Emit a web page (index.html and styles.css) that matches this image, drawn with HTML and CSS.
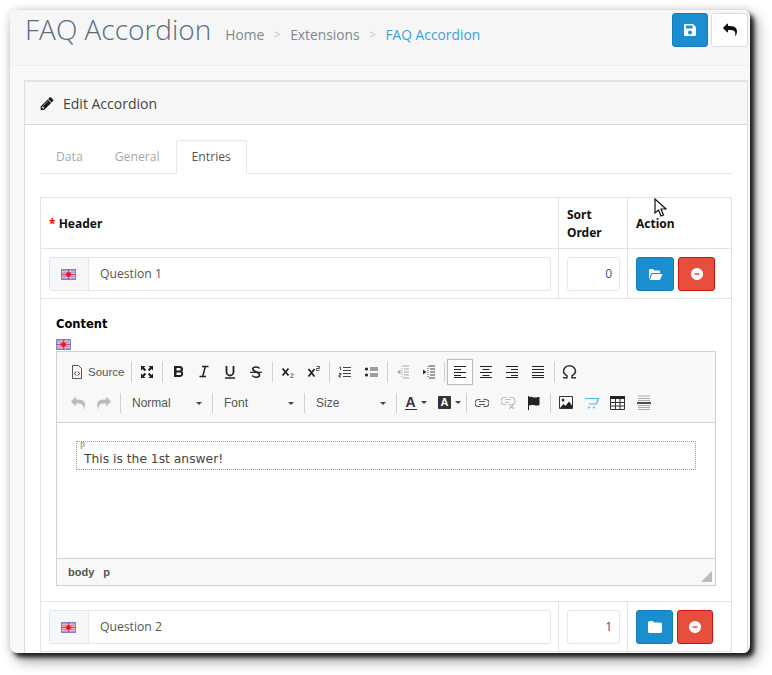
FILE: index.html
```html
<!DOCTYPE html>
<html lang="en">
<head>
<meta charset="utf-8">
<title>FAQ Accordion</title>
<link rel="stylesheet" href="styles.css">
</head>
<body>
<svg class="defs" width="0" height="0" aria-hidden="true">
  <symbol id="flag" viewBox="0 0 15 11">
    <rect width="15" height="11" fill="#e6d8ee"/>
    <path d="M0 0L15 11M15 0L0 11" stroke="#f0a0b4" stroke-width="2"/>
    <path d="M0 1.500h15M0 3.500h15M0 7.500h15M0 9.500h15" stroke="#8f95dc" stroke-width=".7"/>
    <path d="M7.500 0v11M0 5.500h15" stroke="#ea3f50" stroke-width="1.600"/>
    <path d="M5.500 3.500h4v4h-4z" fill="#e8101e"/>
    <path d="M.5.500h14v10H.5z" fill="none" stroke="#7278c4" stroke-width=".9"/>
  </symbol>
  <symbol id="minus" viewBox="0 0 16 16">
    <path fill="#fff" fill-rule="evenodd" d="M8 1a7 7 0 1 0 0 14A7 7 0 0 0 8 1zM5.200 7.200h5.600v1.600H5.200z"/>
  </symbol>
</svg>

<div class="window">
  <header class="page-head">
    <h1>FAQ Accordion</h1>
    <ol class="crumbs">
      <li>Home</li>
      <li class="sl">&gt;</li>
      <li>Extensions</li>
      <li class="sl">&gt;</li>
      <li class="cur">FAQ Accordion</li>
    </ol>
    <div class="head-btns">
      <button class="hbtn save" type="button">
        <svg width="14" height="14" viewBox="0 0 14 14"><path fill="#fff" fill-rule="evenodd" d="M2 1h8l3 3v7.500A1.500 1.500 0 0 1 11.500 13h-9A1.500 1.500 0 0 1 1 11.500v-9A1.500 1.500 0 0 1 2 1zm1 1.500V5.500h6.500V2.500zM7 7.500a2 2 0 1 0 0 4 2 2 0 0 0 0-4z"/></svg>
      </button>
      <button class="hbtn back" type="button">
        <svg width="14" height="14" viewBox="0 0 1792 1792"><path fill="#111" d="M1792 1120q0 166-127 451-3 7-10.500 24t-13.500 30-13 22q-12 17-28 17-15 0-23.500-10t-8.500-25q0-9 2.500-26.500t2.500-23.500q5-68 5-123 0-101-17.500-181t-48.500-138.500-80-101-105.500-69.500-133-42.500-154-21.500-175.500-6h-224v256q0 26-19 45t-45 19-45-19l-512-512q-19-19-19-45t19-45l512-512q19-19 45-19t45 19 19 45v256h224q713 0 875 403 53 134 53 333z"/></svg>
      </button>
    </div>
  </header>

  <section class="panel">
    <div class="panel-head">
      <svg width="14" height="15" viewBox="0 0 1515 1792"><path fill="#1a1a1a" d="M363 1536l91-91-235-235-91 91v107h128v128h107zm523-928q0-22-22-22-10 0-17 7l-542 542q-7 7-7 17 0 22 22 22 10 0 17-7l542-542q7-7 7-17zm-54-192l416 416-832 832H0v-416zm683 96q0 53-37 90l-166 166-416-416 166-165q36-38 90-38 53 0 91 38l235 234q37 39 37 91z"/></svg>
      <span>Edit Accordion</span>
    </div>
    <div class="panel-body">
      <ul class="tabs">
        <li>Data</li>
        <li>General</li>
        <li class="active">Entries</li>
      </ul>
      <table class="entries">
        <colgroup><col class="c1"><col class="c2"><col class="c3"></colgroup>
        <tr class="th-row">
          <th><span class="req">*</span> Header</th>
          <th>Sort Order</th>
          <th>Action</th>
        </tr>
        <tr class="q-row">
          <td>
            <div class="igroup">
              <span class="addon"><svg class="flag"><use href="#flag"/></svg></span>
              <span class="ifield">Question 1</span>
            </div>
          </td>
          <td><div class="sort">0</div></td>
          <td>
            <div class="acts">
              <button class="act blue" type="button">
                <svg width="15" height="13" viewBox="0 0 15 13"><path fill="#fff" d="M1 11.500V2a1 1 0 0 1 1-1h3l1.200 1.500H11a1 1 0 0 1 1 1V5H4.200a1.500 1.500 0 0 0-1.300.8zM4.200 6H14.500l-2.400 5.500a1 1 0 0 1-.9.5H1.700z"/></svg>
              </button>
              <button class="act red" type="button"><svg width="14" height="14"><use href="#minus"/></svg></button>
            </div>
          </td>
        </tr>
        <tr class="c-row">
          <td colspan="3">
            <div class="c-label">Content</div>
            <svg class="flag c-flag"><use href="#flag"/></svg>
            <div class="editor">
              <div class="toolbar">
                <div class="tb-row">
                  <span class="tb source">
                    <svg width="12" height="14" viewBox="0 0 12 14"><path fill="none" stroke="#555" d="M1.500.5h6l3 3v10h-9z"/><path fill="none" stroke="#333" d="M5 6.500L3.500 8.500 5 10.500M7 6.500l1.500 2-1.500 2"/></svg>
                    <span>Source</span>
                  </span>
                  <i class="sep"></i>
                  <span class="tb"><svg width="14" height="14" viewBox="0 0 14 14"><path fill="#222" d="M1 1h4.500L4 2.500l2.200 2.200-1.500 1.500L2.500 4 1 5.500zM13 1v4.500L11.500 4 9.300 6.200 7.800 4.700 10 2.500 8.500 1zM1 13V8.500L2.500 10l2.200-2.200 1.500 1.500L4 11.500 5.500 13zM13 13H8.500L10 11.500 7.800 9.300l1.500-1.500 2.200 2.200L13 8.500z"/></svg></span>
                  <i class="sep"></i>
                  <span class="tb"><svg width="10" height="13" viewBox="0 0 10 13"><path fill="#222" fill-rule="evenodd" d="M1 1h6a3 3 0 0 1 2 5.300A3.200 3.200 0 0 1 7.500 12H1zM3.500 3v2.500H6.500a1.250 1.250 0 0 0 0-2.500zM3.500 7.500V10H7a1.250 1.250 0 0 0 0-2.500z"/></svg></span>
                  <span class="tb"><svg width="12" height="13" viewBox="0 0 12 13"><path fill="none" stroke="#222" stroke-width="1.500" d="M4 1.500h6.500M1.500 11.500H8M7.300 1.500L4.700 11.500"/></svg></span>
                  <span class="tb"><svg width="12" height="14" viewBox="0 0 12 14"><path fill="none" stroke="#222" stroke-width="1.800" d="M2.500 1v6a3.500 3.500 0 0 0 7 0V1"/><path stroke="#222" stroke-width="1.500" d="M1 13h10"/></svg></span>
                  <span class="tb"><svg width="14" height="14" viewBox="0 0 14 14"><path fill="none" stroke="#222" stroke-width="1.600" d="M10.500 3.500C9.500 1.500 4 1.300 3.800 4c-.2 3 6.700 2.500 6.700 6 0 3-6 2.800-7.200.5"/><path stroke="#222" stroke-width="1.200" d="M1 7.300h12"/></svg></span>
                  <i class="sep"></i>
                  <span class="tb"><svg width="14" height="14" viewBox="0 0 14 14"><path fill="none" stroke="#222" stroke-width="1.800" d="M1.500 3.500l6 7M7.500 3.500l-6 7"/><path fill="none" stroke="#777" d="M9.500 9h3l-3 3.500h3"/></svg></span>
                  <span class="tb"><svg width="14" height="14" viewBox="0 0 14 14"><path fill="none" stroke="#222" stroke-width="1.800" d="M1.500 4l6 7.500M7.500 4l-6 7.500"/><path fill="none" stroke="#555" d="M9.500 1.500h3v2h-3v2h3"/></svg></span>
                  <i class="sep"></i>
                  <span class="tb"><svg width="14" height="14" viewBox="0 0 14 14"><path fill="none" stroke="#444" d="M1.500 2h1v3M1 8.500h2v1.500H1v2h2"/><path stroke="#444" d="M5 2.500h8M5 5.500h8M5 8.500h8M5 11.500h8"/></svg></span>
                  <span class="tb"><svg width="14" height="14" viewBox="0 0 14 14"><circle cx="2.500" cy="4" r="1.600" fill="#222"/><circle cx="2.500" cy="10" r="1.600" fill="#222"/><path stroke="#444" d="M6 3h8M6 5h8M6 9h8M6 11h8"/></svg></span>
                  <i class="sep"></i>
                  <span class="tb off"><svg width="14" height="14" viewBox="0 0 14 14"><path stroke="#777" d="M7 1h6M8 4h5M8 7h5M8 10h5M7 13h6"/><path stroke="#777" stroke-dasharray="1 1" d="M6 1v12"/><path fill="#777" d="M4.500 4.500v5L1 7z"/></svg></span>
                  <span class="tb"><svg width="14" height="14" viewBox="0 0 14 14"><path stroke="#444" d="M7 1h6M8 4h5M8 7h5M8 10h5M7 13h6"/><path stroke="#444" stroke-dasharray="1 1" d="M6 1v12"/><path fill="#333" d="M1 4.500v5L4.500 7z"/></svg></span>
                  <i class="sep"></i>
                  <span class="tb on"><svg width="14" height="14" viewBox="0 0 14 14"><path stroke="#222" d="M1 1.500h12M1 4.500h7M1 7.500h12M1 10.500h7M1 12.500h12"/></svg></span>
                  <span class="tb"><svg width="14" height="14" viewBox="0 0 14 14"><path stroke="#222" d="M1 1.500h12M3.500 4.500h7M1 7.500h12M3.500 10.500h7M1 12.500h12"/></svg></span>
                  <span class="tb"><svg width="14" height="14" viewBox="0 0 14 14"><path stroke="#222" d="M1 1.500h12M6 4.500h7M1 7.500h12M6 10.500h7M1 12.500h12"/></svg></span>
                  <span class="tb"><svg width="14" height="14" viewBox="0 0 14 14"><path stroke="#222" d="M1 1.500h12M1 4.500h12M1 7.500h12M1 10.500h12M1 12.500h12"/></svg></span>
                  <i class="sep"></i>
                  <span class="tb"><svg width="15" height="14" viewBox="0 0 15 14"><path fill="none" stroke="#333" stroke-width="1.500" d="M1 12.800h4v-2C2.500 9.500 1.500 8 1.500 6a6 5.200 0 0 1 12 0c0 2-1 3.500-3.500 4.800v2h4"/></svg></span>
                </div>
                <div class="tb-row">
                  <span class="tb"><svg width="14" height="12" viewBox="0 0 1792 1536"><path fill="#bbb" d="M1792 864q0 166-127 451-12 28-28 60-12 17-28 17-32 0-32-35 5-68 5-123 0-101-17-181t-49-138q-32-60-80-101-48-42-106-70-58-27-133-42-75-16-154-22-79-6-175-6H640v256q0 26-19 45t-45 19-45-19L19 463Q0 444 0 418t19-45L531-139q19-19 45-19t45 19 19 45v256h224q713 0 875 403 53 134 53 299z" transform="translate(0 158)"/></svg></span>
                  <span class="tb"><svg width="14" height="12" viewBox="0 0 1792 1536"><path fill="#bbb" d="M1792 864q0 166-127 451-12 28-28 60-12 17-28 17-32 0-32-35 5-68 5-123 0-101-17-181t-49-138q-32-60-80-101-48-42-106-70-58-27-133-42-75-16-154-22-79-6-175-6H640v256q0 26-19 45t-45 19-45-19L19 463Q0 444 0 418t19-45L531-139q19-19 45-19t45 19 19 45v256h224q713 0 875 403 53 134 53 299z" transform="translate(1792 158) scale(-1 1)"/></svg></span>
                  <i class="sep"></i>
                  <span class="combo">Normal<b class="caret"></b></span>
                  <i class="sep"></i>
                  <span class="combo">Font<b class="caret"></b></span>
                  <i class="sep"></i>
                  <span class="combo">Size<b class="caret"></b></span>
                  <i class="sep"></i>
                  <span class="tb color"><span class="a-txt">A</span><b class="caret"></b></span>
                  <span class="tb color bg"><span class="a-bg">A</span><b class="caret"></b></span>
                  <i class="sep"></i>
                  <span class="tb"><svg width="14" height="10" viewBox="0 0 14 10"><path fill="none" stroke="#555" stroke-width="1.100" d="M5.500 1.500H3.500a3.500 3.500 0 0 0 0 7h2M8.500 1.500h2a3.500 3.500 0 0 1 0 7h-2M4 3.500h6M4 6.500h6"/></svg></span>
                  <span class="tb off"><svg width="15" height="14" viewBox="0 0 15 14"><path fill="none" stroke="#999" stroke-width="1.100" d="M5.500 1.500h-2a3.500 3.500 0 0 0 0 7h2M8.500 1.500h2a3.500 3.500 0 0 1 0 7M4 3.500h6M4 6.500h4M8 8l5 5M13 8l-5 5"/></svg></span>
                  <span class="tb"><svg width="14" height="14" viewBox="0 0 14 14"><path fill="#222" d="M1 0h1v14H1z"/><path fill="#222" d="M2 1c3-1 4 .5 6 .5s3-.5 4.500-.5v8c-2 .8-3 .6-5 .2S4 8.800 2 9.500z"/></svg></span>
                  <i class="sep"></i>
                  <span class="tb"><svg width="14" height="13" viewBox="0 0 14 13"><path fill="none" stroke="#333" d="M.5.500h13v12H.5z"/><circle cx="4" cy="4" r="1.500" fill="#333"/><path fill="#222" d="M1 12l3.500-4 2 2L10 5.500l3 4V12z"/></svg></span>
                  <span class="tb"><svg width="14" height="12" viewBox="0 0 14 12"><path fill="none" stroke="#4db5e6" stroke-width="1.200" d="M0 1.500h13.500L11.500 7H4"/><circle cx="4" cy="10.500" r="1" fill="#4db5e6"/><circle cx="9" cy="10.500" r="1" fill="#4db5e6"/></svg></span>
                  <span class="tb"><svg width="15" height="14" viewBox="0 0 15 14"><path fill="#222" d="M0 0h15v3H0z"/><path fill="none" stroke="#333" d="M.5 3v10.500h14V3M5.500 3v10.500M10 3v10.500M.5 6.500h14M.5 10h14"/></svg></span>
                  <span class="tb"><svg width="14" height="16" viewBox="0 0 14 16"><path stroke="#aaa" d="M1 1h12M1 3.500h12M1 5.500h12M1 10.500h12M1 12.500h12M1 14.500h12"/><path stroke="#222" stroke-width="1.600" d="M0 8h14"/></svg></span>
                </div>
              </div>
              <div class="doc">
                <p class="doc-p"><span class="doc-tag">P</span>This is the 1st answer!</p>
              </div>
              <div class="path">
                <span>body</span><span>p</span>
                <svg class="grip" width="11" height="11" viewBox="0 0 11 11"><path fill="#bbb" d="M11 0v11H0z"/></svg>
              </div>
            </div>
          </td>
        </tr>
        <tr class="q-row">
          <td>
            <div class="igroup">
              <span class="addon"><svg class="flag"><use href="#flag"/></svg></span>
              <span class="ifield">Question 2</span>
            </div>
          </td>
          <td><div class="sort">1</div></td>
          <td>
            <div class="acts two">
              <button class="act blue" type="button">
                <svg width="14" height="12" viewBox="0 0 14 12"><path fill="#fff" d="M0 1.500A1.500 1.500 0 0 1 1.500 0h3.300L6 1.500h6.500A1.500 1.500 0 0 1 14 3v7.500a1.500 1.500 0 0 1-1.500 1.500h-11A1.500 1.500 0 0 1 0 10.500z"/></svg>
              </button>
              <button class="act red" type="button"><svg width="14" height="14"><use href="#minus"/></svg></button>
            </div>
          </td>
        </tr>
      </table>
    </div>
  </section>

  <svg class="cursor" width="13" height="20" viewBox="0 0 13 20"><path fill="#fff" stroke="#111" stroke-width="1.200" d="M1 1v14l3.500-3 2.500 6 2.500-1-2.500-6H12z"/></svg>
</div>
</body>
</html>
```

FILE: styles.css
```css
* { box-sizing: border-box; }
html, body { height: 100%; }
body {
  margin: 0;
  padding: 10px 22px 0 10px;
  background: #fff;
  font-family: "Open Sans", "Noto Sans", sans-serif;
  font-size: 12px;
  color: #555;
  overflow: hidden;
}
.defs { position: absolute; }
button { padding: 0; font: inherit; cursor: pointer; }

.window {
  position: relative;
  width: 740px;
  height: 643px;
  overflow: hidden;
  background: #f8f8f8;
  border-radius: 7px;
  box-shadow: 4px 4px 4px rgba(0,0,0,.8), 6px 7px 14px rgba(0,0,0,.45), 0 0 10px rgba(0,0,0,.12);
}

.page-head {
  display: flex;
  align-items: flex-start;
  height: 56px;
  padding: 3px 2px 0 15px;
  background: #f6f6f6;
  border-bottom: 1px solid #eee;
}
h1 {
  margin: -1px 0 0;
  font-size: 28px;
  line-height: 34px;
  font-weight: 300;
  color: #5d6b7d;
}
.crumbs {
  display: flex;
  gap: 8.500px;
  margin: 0 0 0 14px;
  padding: 12px 0 0;
  list-style: none;
  font-size: 13.800px;
  line-height: 19px;
  color: #808890;
}
.crumbs .sl { color: #c8c8c8; font-size: 12px; padding: 0 1px; }
.crumbs .cur { color: #3f9fd6; }
.head-btns { display: flex; gap: 3px; margin-left: auto; }
.hbtn {
  display: flex;
  align-items: center;
  justify-content: center;
  height: 34px;
  border-radius: 3px;
}
.save { width: 36px; background: #1b8ecf; border: 1px solid #1a7cb5; }
.back { width: 37px; background: #fff; border: 1px solid #ddd; }

.panel {
  margin: 14px 2px 0 14px;
  background: #fff;
  border: 1px solid #ddd;
  border-top-width: 2px;
  border-top-color: #e2e2e2;
  height: 700px;
}
.panel-head {
  display: flex;
  align-items: center;
  gap: 9px;
  height: 43px;
  padding: 0 15px;
  background: #f7f7f7;
  border-bottom: 1px solid #d8d8d8;
  font-size: 14px;
  color: #444;
}
.panel-body { padding: 15px 15px 0; }

.tabs {
  display: flex;
  height: 34px;
  margin: 0 0 23px;
  padding: 0;
  list-style: none;
  border-bottom: 1px solid #e6e6e6;
  font-size: 12.200px;
  color: #a8a8a8;
}
.tabs li { padding: 0 16px; line-height: 33px; }
.tabs .active {
  height: 34px;
  line-height: 31px;
  color: #555;
  background: #fff;
  border: 1px solid #e6e6e6;
  border-bottom-color: #fff;
  border-radius: 3px 3px 0 0;
  padding: 0 15px;
}

.entries {
  width: 691px;
  table-layout: fixed;
  border-collapse: collapse;
  background: #fff;
}
.c1 { width: 518px; }
.c2 { width: 69px; }
.c3 { width: 104px; }
.entries td, .entries th { border: 1px solid #e0e3e8; padding: 8px 8px 6px; }
.entries th {
  height: 51px;
  text-align: left;
  font-weight: 700;
  font-size: 12px;
  line-height: 18px;
  color: #111;
  font-family: "Noto Sans", sans-serif;
}
.req { color: #f00; }
.entries .q-row td { height: 50px; vertical-align: top; padding: 8px 8px 7px; }
.entries .q-row td:first-child { padding-right: 7px; }

.igroup { display: flex; height: 34px; border: 1px solid #e2e5ea; border-radius: 3px; }
.addon {
  display: flex;
  align-items: center;
  justify-content: center;
  width: 39px;
  padding-right: 1px;
  background: #f6f7f9;
  border-right: 1px solid #e2e5ea;
  border-radius: 3px 0 0 3px;
}
.flag { display: block; width: 15px; height: 11px; }
.ifield {
  flex: 1;
  padding-left: 11px;
  line-height: 32px;
  font-size: 12.200px;
  color: #555;
}
.sort {
  width: 53px;
  height: 34px;
  padding-right: 7px;
  line-height: 32px;
  text-align: right;
  color: #31547d;
  border: 1px solid #e4e6ea;
  border-radius: 3px;
}
.acts { display: flex; gap: 4px; }
.act {
  display: flex;
  align-items: center;
  justify-content: center;
  width: 38px;
  height: 34px;
  border-radius: 3px;
}
.acts .red { width: 37px; }
.blue { background: #1b8ecf; border: 1px solid #1a7cb5; }
.red { background: #e74f3d; border: 1px solid #d40f0f; }
.acts.two .blue { width: 37px; }
.acts.two .red { width: 36px; }

.entries .c-row td { padding: 17px 15px 15px; }
.c-label {
  font-family: "DejaVu Sans", sans-serif;
  font-size: 11.500px;
  font-weight: 700;
  line-height: 16px;
  color: #000;
}
.c-flag { margin: 7px 0 1px; }

.editor { width: 660px; height: 235px; border: 1px solid #d1d1d1; display: flex; flex-direction: column; }
.toolbar {
  height: 71px;
  padding: 4px 0 5px 8px;
  background: #f8f8f8;
  border-bottom: 1px solid #d1d1d1;
  font-family: "Liberation Sans", Arial, sans-serif;
  font-size: 12px;
  color: #555;
}
.tb-row { display: flex; align-items: center; height: 31px; }
.tb {
  display: flex;
  flex: none;
  align-items: center;
  justify-content: center;
  width: 26px;
  height: 26px;
}
.tb.source { width: 63px; justify-content: flex-start; gap: 5px; padding-left: 6px; font-size: 11.500px; color: #555; }
.tb.off { opacity: .6; }
.tb.on { background: #fff; border: 1px solid #bcbcbc; box-shadow: 0 0 1px rgba(0,0,0,.2); }
.sep { flex: none; width: 1px; height: 20px; margin: 0 2px 0 2.500px; background: #d0d0d0; }
.combo {
  position: relative;
  flex: none;
  width: 86.500px;
  height: 24px;
  padding-left: 9.500px;
  line-height: 24px;
  color: #555;
}
.caret {
  width: 0;
  height: 0;
  border: 3px solid transparent;
  border-top: 3px solid #444;
  border-bottom: 0;
}
.combo .caret { position: absolute; right: 7px; top: 11px; }
.tb.color { width: 32.500px; gap: 4px; justify-content: flex-start; padding-left: 6px; }
.tb.color.bg { padding-left: 7px; }
.a-txt {
  font-size: 14px;
  font-weight: 700;
  line-height: 14px;
  color: #333;
  border-bottom: 1.500px solid #333;
  padding: 0 1px;
}
.a-bg {
  width: 13px;
  height: 13px;
  border-radius: 1px;
  font-size: 11px;
  font-weight: 700;
  line-height: 13px;
  text-align: center;
  color: #fff;
  background: #333;
}

.doc { flex: 1; padding: 18px 19px 0; background: #fff; }
.doc-p {
  position: relative;
  height: 29px;
  margin: 0;
  padding: 6px 0 0 7px;
  border: 1px dotted #999;
  font-family: "DejaVu Sans", sans-serif;
  font-size: 12.300px;
  line-height: 22px;
  color: #444;
}
.doc-tag {
  position: absolute;
  left: 3px;
  top: 1px;
  font-size: 8px;
  line-height: 8px;
  color: #888;
}
.path {
  position: relative;
  display: flex;
  align-items: center;
  gap: 9px;
  height: 27px;
  padding-left: 11px;
  background: #f8f8f8;
  border-top: 1px solid #d1d1d1;
  font-family: "Liberation Sans", Arial, sans-serif;
  font-size: 11px;
  font-weight: 700;
  color: #555;
}
.grip { position: absolute; right: 3px; bottom: 3px; }

.cursor { position: absolute; left: 644px; top: 188px; }
```
